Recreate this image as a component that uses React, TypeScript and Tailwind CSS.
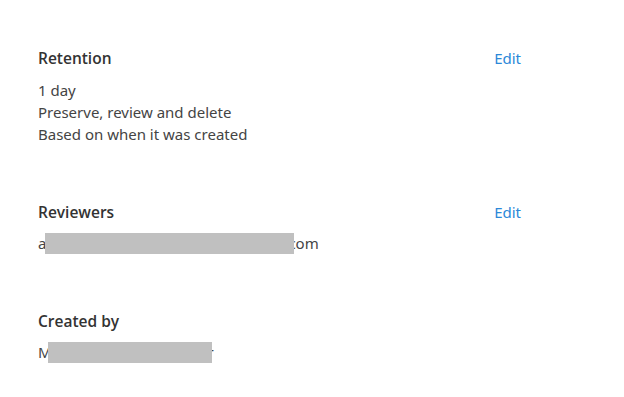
import React from "react";

const font = { fontFamily: '"Segoe UI", "Noto Sans", "Open Sans", sans-serif' };
const headFont = { fontFamily: '"Segoe UI", "Open Sans", "Noto Sans", sans-serif' };

function Redacted({ lead, tail, box }: { lead: string; tail: string; box: string }) {
  return (
    <div className="flex h-[22px] items-center text-[15px] leading-[22px] text-[#444444]">
      <span>{lead}</span>
      <span className={`relative z-10 inline-block h-[21px] bg-[#c0c0c0] ${box}`} />
      <span>{tail}</span>
    </div>
  );
}

function Heading({ title, edit }: { title: string; edit?: boolean }) {
  return (
    <div className="flex h-[24px] items-center justify-between">
      <span className="text-[15.5px] font-semibold leading-[24px] text-[#333333]" style={headFont}>
        {title}
      </span>
      {edit && <span className="text-[15px] leading-[24px] text-[#2b88d8]">Edit</span>}
    </div>
  );
}

export default function App() {
  return (
    <div className="h-[397px] w-[624px] bg-white pl-[38px] pr-[103px] pt-[46px]" style={font}>
      <section>
        <Heading title="Retention" edit />
        <div className="mt-[9px] text-[15px] leading-[22px] text-[#444444]">
          <div>1 day</div>
          <div>Preserve, review and delete</div>
          <div>Based on when it was created</div>
        </div>
      </section>
      <section className="mt-[55px]">
        <Heading title="Reviewers" edit />
        <div className="mt-2">
          <Redacted lead="a" tail="com" box="w-[249px] -ml-[1px] -mr-[6px]" />
        </div>
      </section>
      <section className="mt-[55px]">
        <Heading title="Created by" />
        <div className="mt-2">
          <Redacted lead="M" tail="r" box="w-[164px] -ml-[4px] -mr-[4px]" />
        </div>
      </section>
    </div>
  );
}
